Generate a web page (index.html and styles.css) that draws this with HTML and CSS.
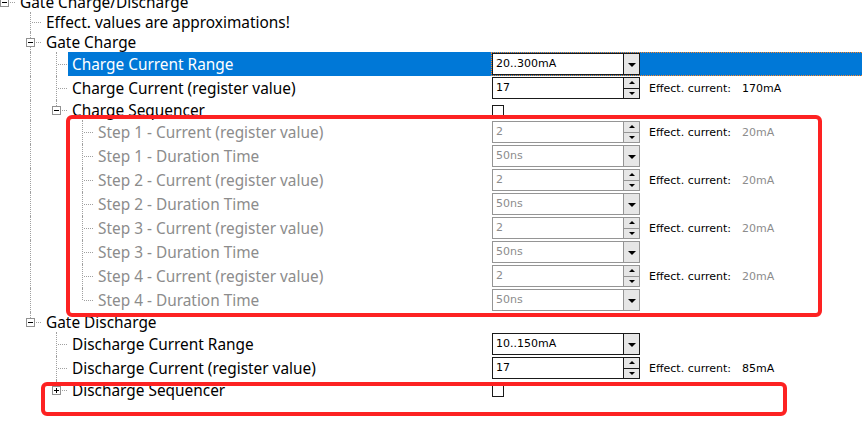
FILE: index.html
```html
<!DOCTYPE html>
<html>
<head>
<meta charset="utf-8">
<link rel="stylesheet" href="styles.css">
</head>
<body>
<div class="view">
  <div class="tree">
    <div class="row t">
      <div class="left">
        <span class="node last"><span class="exp minus"></span></span>
        <span class="label">Gate Charge/Discharge</span>
      </div>
    </div>
    <div class="row t">
      <div class="left">
        <span class="guide"></span>
        <span class="node"></span>
        <span class="label">Effect. values are approximations!</span>
      </div>
    </div>
    <div class="row t">
      <div class="left">
        <span class="guide"></span>
        <span class="node"><span class="exp minus"></span></span>
        <span class="label">Gate Charge</span>
      </div>
    </div>
    <div class="row e sel">
      <div class="left">
        <span class="guide"></span><span class="guide v"></span>
        <span class="node"></span>
        <span class="label">Charge Current Range</span>
      </div>
      <div class="val">
        <div class="ed"><span class="txt">20..300mA</span><span class="btn drop"><i class="down"></i></span></div>
      </div>
    </div>
    <div class="row e">
      <div class="left">
        <span class="guide"></span><span class="guide v"></span>
        <span class="node"></span>
        <span class="label">Charge Current (register value)</span>
      </div>
      <div class="val">
        <div class="ed"><span class="txt">17</span><span class="btn spin"><b><i class="sup"></i></b><b><i class="sdown"></i></b></span></div>
        <span class="eff">Effect. current:</span><span class="effv">170mA</span>
      </div>
    </div>
    <div class="row t">
      <div class="left">
        <span class="guide"></span><span class="guide v"></span>
        <span class="node last"><span class="exp minus"></span></span>
        <span class="label">Charge Sequencer</span>
      </div>
      <div class="val"><span class="chk"></span></div>
    </div>

    <div class="row e dis">
      <div class="left">
        <span class="guide"></span><span class="guide v"></span><span class="guide"></span>
        <span class="node"></span>
        <span class="label">Step 1 - Current (register value)</span>
      </div>
      <div class="val">
        <div class="ed"><span class="txt">2</span><span class="btn spin"><b><i class="sup"></i></b><b><i class="sdown"></i></b></span></div>
        <span class="eff">Effect. current:</span><span class="effv">20mA</span>
      </div>
    </div>
    <div class="row e dis">
      <div class="left">
        <span class="guide"></span><span class="guide v"></span><span class="guide"></span>
        <span class="node"></span>
        <span class="label">Step 1 - Duration Time</span>
      </div>
      <div class="val">
        <div class="ed"><span class="txt">50ns</span><span class="btn drop"><i class="down"></i></span></div>
      </div>
    </div>
    <div class="row e dis">
      <div class="left">
        <span class="guide"></span><span class="guide v"></span><span class="guide"></span>
        <span class="node"></span>
        <span class="label">Step 2 - Current (register value)</span>
      </div>
      <div class="val">
        <div class="ed"><span class="txt">2</span><span class="btn spin"><b><i class="sup"></i></b><b><i class="sdown"></i></b></span></div>
        <span class="eff">Effect. current:</span><span class="effv">20mA</span>
      </div>
    </div>
    <div class="row e dis">
      <div class="left">
        <span class="guide"></span><span class="guide v"></span><span class="guide"></span>
        <span class="node"></span>
        <span class="label">Step 2 - Duration Time</span>
      </div>
      <div class="val">
        <div class="ed"><span class="txt">50ns</span><span class="btn drop"><i class="down"></i></span></div>
      </div>
    </div>
    <div class="row e dis">
      <div class="left">
        <span class="guide"></span><span class="guide v"></span><span class="guide"></span>
        <span class="node"></span>
        <span class="label">Step 3 - Current (register value)</span>
      </div>
      <div class="val">
        <div class="ed"><span class="txt">2</span><span class="btn spin"><b><i class="sup"></i></b><b><i class="sdown"></i></b></span></div>
        <span class="eff">Effect. current:</span><span class="effv">20mA</span>
      </div>
    </div>
    <div class="row e dis">
      <div class="left">
        <span class="guide"></span><span class="guide v"></span><span class="guide"></span>
        <span class="node"></span>
        <span class="label">Step 3 - Duration Time</span>
      </div>
      <div class="val">
        <div class="ed"><span class="txt">50ns</span><span class="btn drop"><i class="down"></i></span></div>
      </div>
    </div>
    <div class="row e dis">
      <div class="left">
        <span class="guide"></span><span class="guide v"></span><span class="guide"></span>
        <span class="node"></span>
        <span class="label">Step 4 - Current (register value)</span>
      </div>
      <div class="val">
        <div class="ed"><span class="txt">2</span><span class="btn spin"><b><i class="sup"></i></b><b><i class="sdown"></i></b></span></div>
        <span class="eff">Effect. current:</span><span class="effv">20mA</span>
      </div>
    </div>
    <div class="row e dis">
      <div class="left">
        <span class="guide"></span><span class="guide v"></span><span class="guide"></span>
        <span class="node last"></span>
        <span class="label">Step 4 - Duration Time</span>
      </div>
      <div class="val">
        <div class="ed"><span class="txt">50ns</span><span class="btn drop"><i class="down"></i></span></div>
      </div>
    </div>

    <div class="row t">
      <div class="left">
        <span class="guide"></span>
        <span class="node last"><span class="exp minus"></span></span>
        <span class="label">Gate Discharge</span>
      </div>
    </div>
    <div class="row e">
      <div class="left">
        <span class="guide"></span><span class="guide"></span>
        <span class="node"></span>
        <span class="label">Discharge Current Range</span>
      </div>
      <div class="val">
        <div class="ed"><span class="txt">10..150mA</span><span class="btn drop"><i class="down"></i></span></div>
      </div>
    </div>
    <div class="row e">
      <div class="left">
        <span class="guide"></span><span class="guide"></span>
        <span class="node"></span>
        <span class="label">Discharge Current (register value)</span>
      </div>
      <div class="val">
        <div class="ed"><span class="txt">17</span><span class="btn spin"><b><i class="sup"></i></b><b><i class="sdown"></i></b></span></div>
        <span class="eff">Effect. current:</span><span class="effv">85mA</span>
      </div>
    </div>
    <div class="row t">
      <div class="left">
        <span class="guide"></span><span class="guide"></span>
        <span class="node last"><span class="exp plus"></span></span>
        <span class="label">Discharge Sequencer</span>
      </div>
      <div class="val"><span class="chk"></span></div>
    </div>
  </div>
  <div class="mark mark-charge"></div>
  <div class="mark mark-discharge"></div>
</div>
</body>
</html>
```

FILE: styles.css
```css
html, body {
  margin: 0;
  padding: 0;
  background: #ffffff;
}

.view {
  position: relative;
  width: 862px;
  height: 422px;
  overflow: hidden;
}

.tree {
  margin-top: -8px;
  font-family: "Noto Sans", sans-serif;
  font-size: 15.4px;
  color: #000000;
}

.row {
  display: flex;
  align-items: stretch;
}

.row.t { height: 20px; }
.row.e { height: 24px; }

.left {
  display: flex;
  align-items: stretch;
  width: 491px;
  flex: none;
}

.guide {
  flex: none;
  width: 26px;
  box-sizing: border-box;
}

.guide.v {
  margin-left: 4px;
  width: 22px;
  border-left: 1px dotted #a0a0a0;
}

.node {
  position: relative;
  flex: none;
  width: 16px;
}

.node::before {
  content: "";
  position: absolute;
  left: 4px;
  top: 0;
  bottom: 0;
  border-left: 1px dotted #a0a0a0;
}

.node.last::before {
  bottom: 50%;
}

.node::after {
  content: "";
  position: absolute;
  left: 6px;
  width: 9px;
  top: 50%;
  border-top: 1px dotted #a0a0a0;
}

.exp {
  position: absolute;
  z-index: 1;
  left: 0;
  top: 50%;
  margin-top: -4px;
  width: 9px;
  height: 9px;
  box-sizing: border-box;
  border: 1px solid #919191;
  background: #ffffff;
}

.exp::before {
  content: "";
  position: absolute;
  left: 1px;
  top: 3px;
  width: 5px;
  height: 1px;
  background: #000000;
}

.exp.plus::after {
  content: "";
  position: absolute;
  left: 3px;
  top: 1px;
  width: 1px;
  height: 5px;
  background: #000000;
}

.label {
  flex: 1;
  padding-left: 4px;
  white-space: nowrap;
  display: flex;
  align-items: center;
  overflow: hidden;
}

.row.sel .label {
  background: #0078d7;
  color: #ffffff;
}

.row.dis .label {
  color: #8c8c8c;
}

.val {
  flex: 1;
  display: flex;
  align-items: center;
  padding-left: 1px;
  font-family: "DejaVu Sans", sans-serif;
  font-size: 11px;
  color: #000000;
}

.row.sel .val {
  background: #0078d7;
  border: 1px dotted #ff8728;
  border-right: none;
  padding-left: 0;
}

.ed {
  flex: none;
  width: 148px;
  height: 22px;
  box-sizing: border-box;
  border: 1px solid #1a1a1a;
  background: #ffffff;
  display: flex;
}

.txt {
  flex: 1;
  padding-left: 3px;
  line-height: 20px;
  white-space: nowrap;
}

.row.dis .ed {
  border-color: #959595;
}

.row.dis .txt {
  color: #8c8c8c;
}

.btn {
  flex: none;
  width: 16px;
  box-sizing: border-box;
  border-left: 1px solid #1a1a1a;
  background: #e6e6e6;
}

.row.dis .btn {
  border-left-color: #959595;
}

.drop {
  display: flex;
  align-items: center;
  justify-content: center;
}

.down {
  width: 0;
  height: 0;
  border-left: 4px solid transparent;
  border-right: 4px solid transparent;
  border-top: 4px solid #000000;
  margin-top: 1px;
}

.spin {
  display: flex;
  flex-direction: column;
}

.spin b {
  flex: 1;
  display: flex;
  align-items: center;
  justify-content: center;
}

.spin b + b {
  border-top: 1px solid #1a1a1a;
}

.row.dis .spin b + b {
  border-top-color: #959595;
}

.sup {
  width: 0;
  height: 0;
  border-left: 3px solid transparent;
  border-right: 3px solid transparent;
  border-bottom: 3px solid #000000;
}

.sdown {
  width: 0;
  height: 0;
  border-left: 3px solid transparent;
  border-right: 3px solid transparent;
  border-top: 3px solid #000000;
}

.eff {
  flex: none;
  width: 93px;
  margin-left: 9px;
  white-space: nowrap;
}

.effv {
  white-space: nowrap;
}

.row.dis .effv {
  color: #8c8c8c;
}

.chk {
  width: 12px;
  height: 12px;
  box-sizing: border-box;
  border: 1px solid #1a1a1a;
  background: #ffffff;
  margin-top: 1px;
}

.mark {
  position: absolute;
  box-sizing: border-box;
  border: 4px solid #fd2222;
  border-radius: 6px;
}

.mark-charge {
  left: 66px;
  top: 115px;
  width: 756px;
  height: 202px;
}

.mark-discharge {
  left: 41px;
  top: 382px;
  width: 746px;
  height: 34px;
}
```
